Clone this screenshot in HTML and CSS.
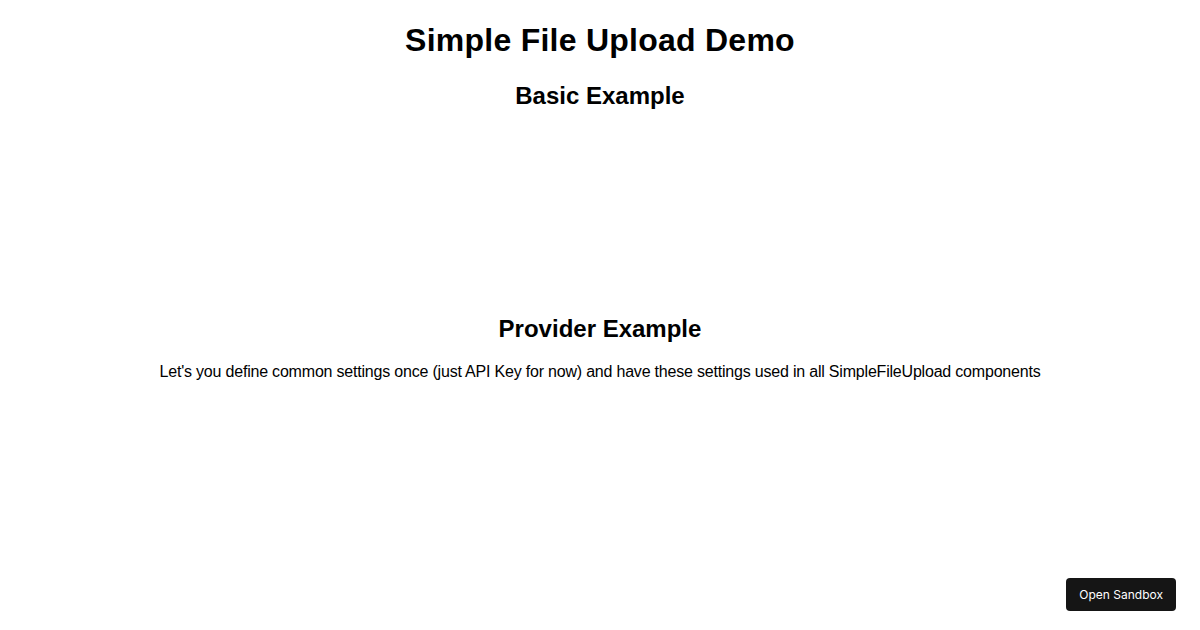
FILE: index.html
```html
<!DOCTYPE html>
<html lang="en">
<head>
<meta charset="utf-8">
<title>Simple File Upload Demo</title>
<link rel="stylesheet" href="styles.css">
</head>
<body>
<div class="app">
  <h1>Simple File Upload Demo</h1>
  <h2>Basic Example</h2>
  <div class="uploader"></div>
  <h2>Provider Example</h2>
  <p>Let's you define common settings once (just API Key for now) and have these settings used in all SimpleFileUpload components</p>
  <div class="uploader"></div>
</div>
<a class="sandbox-btn" href="#">Open Sandbox</a>
</body>
</html>
```

FILE: styles.css
```css
html, body {
  background: #fff;
}
body {
  margin: 8px;
}
.app {
  font-family: "Liberation Sans", Arial, sans-serif;
  text-align: center;
  color: #000;
}
h1 {
  font-size: 32px;
  letter-spacing: 0.25px;
  margin: 13.5px 0 23.44px;
}
h2 {
  font-size: 24px;
  margin: 19.92px 0;
}
p {
  font-size: 16px;
  letter-spacing: -0.2px;
  margin: 16px 0;
}
.uploader {
  height: 165px;
}
.sandbox-btn {
  position: fixed;
  right: 24px;
  bottom: 19px;
  display: flex;
  align-items: center;
  height: 33px;
  padding: 0 13px;
  background: #151515;
  border-radius: 4px;
  color: #fff;
  text-decoration: none;
  font-family: Inter, "Liberation Sans", sans-serif;
  font-size: 12px;
}
```
